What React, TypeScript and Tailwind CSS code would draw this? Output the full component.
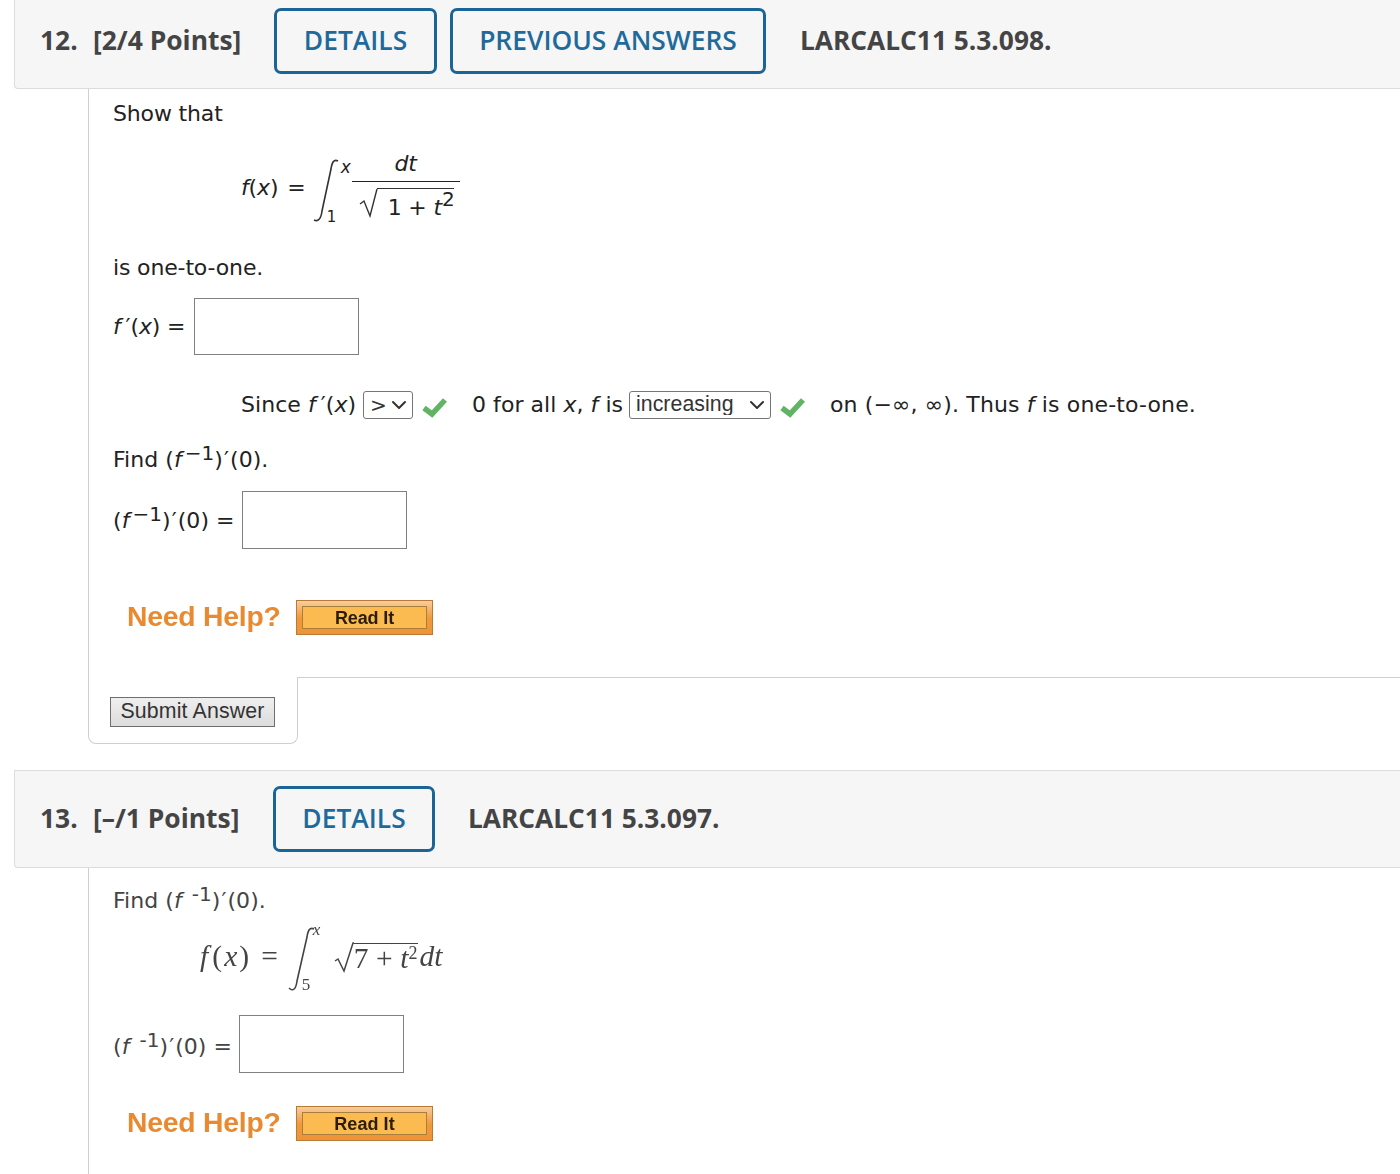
import React from "react";
import { ChevronDown } from "lucide-react";

const verdana = "font-['DejaVu_Sans',sans-serif] text-[22px] leading-none text-[#222] tracking-[-0.15px]";

const OutlineButton = ({ label, width }: { label: string; width: string }) => (
  <div
    className={`${width} flex h-[66px] items-center justify-center rounded-[7px] border-[3px] border-[#1a6496] pb-[2px] text-[26.4px] font-semibold text-[#1f6a9c]`}
  >
    {label}
  </div>
);

const Check = () => (
  <svg width="26" height="22" viewBox="0 0 26 22" className="shrink-0 translate-y-[3px] blur-[0.4px]">
    <path d="M2 11 L10 17 L23 3" fill="none" stroke="#5fb563" strokeWidth="5.5" />
  </svg>
);

const Var = ({ children }: { children: React.ReactNode }) => <i className="font-normal">{children}</i>;

const Prime = () => <span className="mx-[1px]">′</span>;

const TextInput = ({ className }: { className: string }) => (
  <input className={`${className} border border-[#808080] bg-white`} />
);

const Dropdown = ({ value, className, font }: { value: string; className: string; font: string }) => (
  <div className={`${className} relative h-[28px]`}>
    <select
      className={`${font} h-full w-full appearance-none rounded-[3px] border border-[#767676] bg-white pb-[1px] pl-[6px] text-[#333]`}
    >
      <option>{value}</option>
    </select>
    <ChevronDown size={24} strokeWidth={2} className="pointer-events-none absolute right-[2px] top-[2px] text-[#333]" />
  </div>
);

const Help = ({ className }: { className: string }) => (
  <div className={`${className} flex items-center pl-[38px]`}>
    <span className="w-[169px] pb-[2px] font-['Liberation_Sans',sans-serif] text-[28.3px] font-bold tracking-[-0.2px] text-[#ea8a30] blur-[0.5px]">
      Need Help?
    </span>
    <div className="flex h-[35px] w-[137px] items-center justify-center border border-[#b87a35] bg-gradient-to-b from-[#f8cc9c] via-[#f09a3c] to-[#ee9338] p-[5px]">
      <div className="flex h-full w-full items-center justify-center border border-[#a8803c] bg-[#fcbb50] font-['Liberation_Sans',sans-serif] text-[18px] font-bold text-[#2a1c08] blur-[0.4px]">
        Read It
      </div>
    </div>
  </div>
);

const Header = ({
  num,
  points,
  code,
  pointsWidth,
  className,
  children,
}: {
  num: string;
  points: string;
  code: string;
  pointsWidth: string;
  className: string;
  children: React.ReactNode;
}) => (
  <div
    className={`${className} ml-[14px] flex items-center rounded-bl-[4px] border-b border-l border-[#dcdcdc] bg-[#f6f6f6] font-['Open_Sans',sans-serif] tracking-normal text-[#444]`}
  >
    <span className="ml-[25px] w-[53px] pb-[1px] text-[26.4px] font-bold">{num}</span>
    <span className={`${pointsWidth} pb-[1px] text-[26.4px] font-bold`}>{points}</span>
    {children}
    <span className="pb-[2px] text-[26.3px] font-bold">{code}</span>
  </div>
);

const Sup = ({ gap }: { gap?: boolean }) => (
  <sup className="relative top-[-7px] align-baseline text-[20px] leading-none">
    {gap ? <span className="ml-[10px]">-1</span> : <span className="ml-[3px]">−1</span>}
  </sup>
);

const FirstIntegral = () => (
  <div className="ml-[128px] mt-[24px] flex h-[75px] items-center">
    <span className="pt-[2px]">
      <Var>f</Var>(<Var>x</Var>)<span className="ml-[9px]">=</span>
    </span>
    <div className="relative ml-[7px] h-[75px] w-[39px]">
      <svg width="30" height="75" viewBox="0 0 30 75" className="absolute left-0 top-0">
        <path d="M25 12 C21 10 19 13 18 20 L9 62 C8 70 5 73 1 71" fill="none" stroke="#333" strokeWidth="1.6" />
      </svg>
      <span className="absolute left-[28px] top-[10px] text-[17px] italic">x</span>
      <span className="absolute left-[14px] top-[61px] text-[15px]">1</span>
    </div>
    <div className="flex w-[108px] flex-col items-start">
      <span className="h-[28px] self-center italic">dt</span>
      <div className="h-px w-full bg-[#222]" />
      <div className="relative ml-[5px] flex h-[38px] w-[97px] items-center pl-[31px] pt-[14px]">
        <svg width="30" height="34" viewBox="0 0 30 34" className="absolute left-0 top-[2px]">
          <path d="M3 20 L7 17 L13 32 L20 5" fill="none" stroke="#333" strokeWidth="1.4" />
        </svg>
        <div className="absolute left-[20px] right-0 top-[6px] h-px bg-[#333]" />
        <span className="whitespace-nowrap">
          1 + <Var>t</Var>
          <sup className="relative top-[-9px] align-baseline text-[20px] leading-none">2</sup>
        </span>
      </div>
    </div>
  </div>
);

const SecondIntegral = () => (
  <div className="ml-[87px] mt-[3px] flex h-[80px] items-center font-['Liberation_Serif',serif] text-[29.5px] text-[#444] blur-[0.4px]">
    <span className="italic">f</span>
    <span className="ml-[4px]">(</span>
    <span className="mx-[2px] italic">x</span>
    <span>)</span>
    <span className="ml-[12px]">=</span>
    <div className="relative ml-[10px] h-[80px] w-[46px]">
      <svg width="30" height="80" viewBox="0 0 30 80" className="absolute left-0 top-0">
        <path d="M26 12 C22 10 20 13 19 20 L9 64 C8 72 5 75 1 71" fill="none" stroke="#444" strokeWidth="1.6" />
      </svg>
      <span className="absolute left-[25px] top-[4px] text-[17px] italic">x</span>
      <span className="absolute left-[14px] top-[59px] text-[17px]">5</span>
    </div>
    <svg width="20" height="34" viewBox="0 0 20 34" className="shrink-0">
      <path d="M1 21 L4 19 L10 31 L19 3 H20" fill="none" stroke="#444" strokeWidth="1.5" />
    </svg>
    <span className="whitespace-nowrap border-t-[1.5px] border-[#444] leading-[28px]">
      7 + <i>t</i>
      <sup className="relative top-[-9px] align-baseline text-[18px] leading-none">2</sup>
    </span>
    <span className="ml-[2px] italic">dt</span>
  </div>
);

export default function App() {
  return (
    <div className={`h-[1174px] w-[1400px] overflow-hidden bg-white ${verdana}`}>
      <Header
        num="12."
        points="[2/4 Points]"
        code="LARCALC11 5.3.098."
        pointsWidth="w-[181px]"
        className="h-[89px] pb-[6px]"
      >
        <OutlineButton label="DETAILS" width="w-[163px]" />
        <div className="ml-[13px] mr-[34px]">
          <OutlineButton label="PREVIOUS ANSWERS" width="w-[316px]" />
        </div>
      </Header>

      <div className="ml-[88px]">
        <div className="h-[588px] border-l border-[#cfcfcf] pl-[24px]">
          <p className="pt-[14px]">Show that</p>
          <FirstIntegral />
          <p className="mt-[33px]">is one-to-one.</p>

          <div className="mt-[19px] flex items-center gap-[9px]">
            <span>
              <Var>f</Var>
              <span className="ml-[5px]">′</span>(<Var>x</Var>) =
            </span>
            <TextInput className="h-[57px] w-[165px]" />
          </div>

          <div className="ml-[128px] mt-[36px] flex h-[28px] items-center whitespace-nowrap tracking-[0.05px]">
            <span className="w-[122px]">
              Since <Var>f</Var>
              <span className="ml-[5px]">′</span>(<Var>x</Var>)
            </span>
            <Dropdown value=">" className="w-[50px]" font="font-['DejaVu_Sans',sans-serif] text-[20px]" />
            <span className="ml-[9px] w-[50px]">
              <Check />
            </span>
            <span className="w-[157px]">
              0 for all <Var>x</Var>, <Var>f</Var> is
            </span>
            <Dropdown value="increasing" className="w-[142px]" font="font-['Liberation_Sans',sans-serif] text-[21.3px]" />
            <span className="ml-[9px] w-[50px]">
              <Check />
            </span>
            <span className="tracking-[0.14px]">
              on (−∞, ∞). Thus <Var>f</Var> is one-to-one.
            </span>
          </div>

          <p className="mt-[26px] leading-[30px] tracking-[0.05px]">
            Find (<Var>f</Var>
            <Sup />
            )<Prime />
            (0).
          </p>

          <div className="mt-[16px] flex items-center gap-[7px] tracking-[0.05px]">
            <span className="pt-[2px]">
              (<Var>f</Var>
              <Sup />
              )<Prime />
              (0) =
            </span>
            <TextInput className="h-[58px] w-[165px]" />
          </div>

          <Help className="-ml-[24px] mt-[51px] h-[35px]" />
        </div>

        <div className="flex h-[67px]">
          <div className="h-full w-[210px] rounded-b-[8px] border-b border-l border-r border-[#cfcfcf] pl-[21px] pt-[20px]">
            <button className="h-[30px] w-[165px] border border-[#6e6e6e] bg-gradient-to-b from-[#efefef] to-[#dcdcdc] font-['Liberation_Sans',sans-serif] text-[21.3px] leading-none tracking-[0.15px] text-[#333]">
              Submit Answer
            </button>
          </div>
          <div className="flex-1 border-t border-[#cfcfcf]" />
        </div>
      </div>

      <div className="h-[26px]" />

      <Header
        num="13."
        points="[–/1 Points]"
        code="LARCALC11 5.3.097."
        pointsWidth="w-[180px]"
        className="h-[98px] border-t"
      >
        <OutlineButton label="DETAILS" width="w-[162px]" />
        <div className="w-[33px]" />
      </Header>

      <div className="ml-[88px] h-[306px] border-l border-[#cfcfcf] pl-[24px] tracking-[0.05px] text-[#444]">
        <p className="pt-[20px] leading-[26px]">
          Find (<Var>f</Var>
          <Sup gap />
          )<Prime />
          (0).
        </p>
        <SecondIntegral />
        <div className="mt-[18px] flex items-center gap-[7px]">
          <span className="whitespace-nowrap pt-[5px]">
            (<Var>f</Var>
            <Sup gap />
            )<Prime />
            (0) =
          </span>
          <TextInput className="h-[58px] w-[165px]" />
        </div>
        <Help className="-ml-[24px] mt-[33px] h-[35px]" />
      </div>
    </div>
  );
}
